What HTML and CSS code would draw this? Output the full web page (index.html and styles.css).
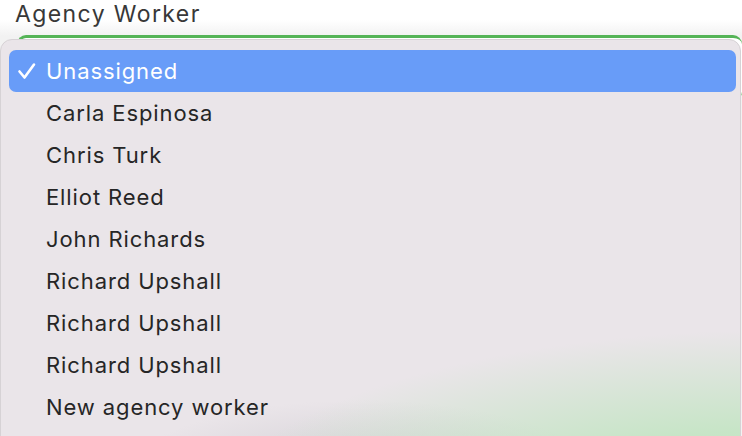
FILE: index.html
```html
<!DOCTYPE html>
<html>
<head>
<meta charset="utf-8">
<link rel="stylesheet" href="styles.css">
</head>
<body>
<div class="page">
  <div class="label">Agency Worker</div>
  <div class="field"></div>
  <div class="menu">
    <div class="item selected"><span class="check"><svg width="20" height="18" viewBox="0 0 20 18"><path d="M2.5 9.5 L7.5 15.5 L17 2.5" fill="none" stroke="#fff" stroke-width="2.6" stroke-linecap="round" stroke-linejoin="round"/></svg></span>Unassigned</div>
    <div class="item">Carla Espinosa</div>
    <div class="item">Chris Turk</div>
    <div class="item">Elliot Reed</div>
    <div class="item">John Richards</div>
    <div class="item">Richard Upshall</div>
    <div class="item">Richard Upshall</div>
    <div class="item">Richard Upshall</div>
    <div class="item">New agency worker</div>
  </div>
</div>
</body>
</html>
```

FILE: styles.css
```css
html, body {
  margin: 0;
  padding: 0;
}
body {
  width: 742px;
  height: 436px;
  overflow: hidden;
  background: #fff;
  font-family: Inter, "Noto Sans", sans-serif;
}
.page {
  position: relative;
  width: 742px;
  height: 436px;
  overflow: hidden;
  background: linear-gradient(#ffffff 0px, #ffffff 20px, #f2f2f2 36px);
}
.label {
  padding: 0 0 0 15px;
  height: 35px;
  font-size: 23px;
  line-height: 28px;
  color: #383838;
  letter-spacing: 1.4px;
}
.field {
  margin-left: 17px;
  height: 60px;
  border: 3px solid #55b457;
  border-radius: 9px;
  border-right: none;
  background: #fff;
}
.menu {
  position: absolute;
  left: 0;
  top: 39px;
  width: 741px;
  height: 420px;
  box-sizing: border-box;
  padding: 10px 4px 0 8px;
  border: 1px solid #d6d2d5;
  border-radius: 12px;
  background:
    radial-gradient(ellipse 580px 200px at 780px 490px, rgba(192,230,192,1) 0%, rgba(195,229,195,0.9) 50%, rgba(233,228,232,0) 100%),
    radial-gradient(ellipse 240px 80px at 360px 440px, rgba(205,202,208,0.9) 0%, rgba(233,228,232,0) 100%),
    #eae5e9;
}
.item {
  height: 42px;
  line-height: 42px;
  padding-left: 37px;
  font-size: 22px;
  color: #262626;
  letter-spacing: 0.9px;
  position: relative;
}
.item.selected {
  background: #689cf8;
  color: #fff;
  border-radius: 7px;
}
.check {
  position: absolute;
  left: 8px;
  top: 12px;
  width: 20px;
  height: 18px;
  display: block;
}
.check svg {
  display: block;
}
```
